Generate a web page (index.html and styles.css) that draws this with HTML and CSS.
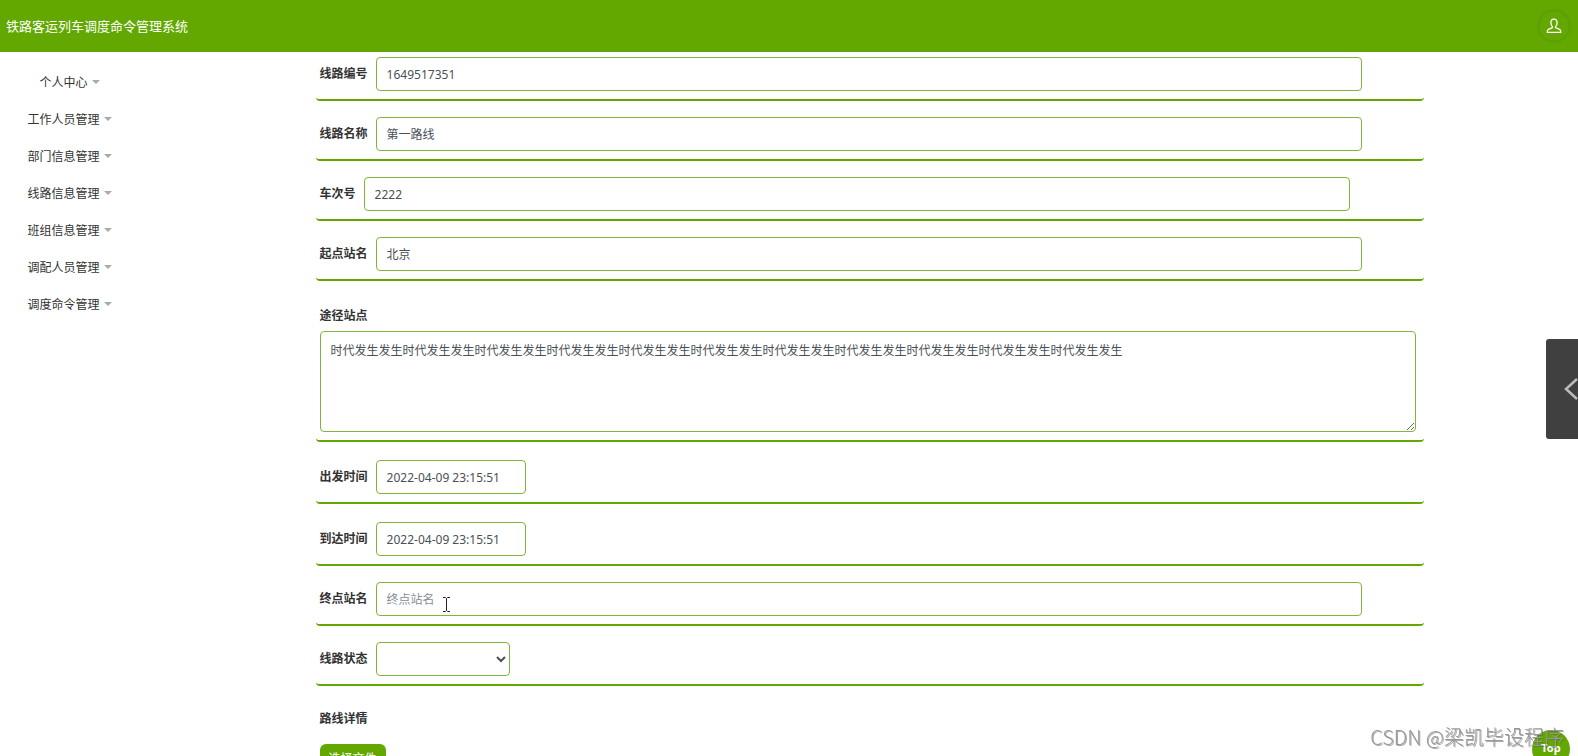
FILE: index.html
```
<!DOCTYPE html>
<html lang="zh-CN">
<head>
    <meta charset="UTF-8">
    <meta name="viewport" content="width=device-width, initial-scale=1.0">
    <title>铁路客运列车调度命令管理系统</title>
    <link rel="stylesheet" href="styles.css">
</head>
<body>
    <header class="navbar">
        <h1 class="brand">铁路客运列车调度命令管理系统</h1>
        <button type="button" class="user-btn" aria-label="个人中心">
            <svg width="16" height="16" viewBox="0 0 16 16" fill="none" stroke="currentColor" stroke-width="1.3" stroke-linejoin="round">
                <path d="M8 1.200C6 1.200 4.900 2.700 4.900 4.700C4.900 6.500 5.600 8 6.500 8.700V9.700L2.500 11.300C1.600 11.700 1.200 12.500 1.200 14.300H14.800C14.800 12.500 14.400 11.700 13.500 11.300L9.500 9.700V8.700C10.400 8 11.100 6.500 11.100 4.700C11.100 2.700 10 1.200 8 1.200Z"/>
            </svg>
        </button>
    </header>

    <div class="wrapper">
        <nav class="sidebar">
            <ul class="menu">
                <li><a href="#">个人中心</a></li>
                <li><a href="#">工作人员管理</a></li>
                <li><a href="#">部门信息管理</a></li>
                <li><a href="#">线路信息管理</a></li>
                <li><a href="#">班组信息管理</a></li>
                <li><a href="#">调配人员管理</a></li>
                <li><a href="#">调度命令管理</a></li>
            </ul>
        </nav>

        <form class="main-form" action="">
            <div class="form-group">
                <label for="xianlubianhao">线路编号</label>
                <input type="text" class="form-control" id="xianlubianhao" value="1649517351">
            </div>
            <div class="form-group">
                <label for="xianlumingcheng">线路名称</label>
                <input type="text" class="form-control" id="xianlumingcheng" value="第一路线">
            </div>
            <div class="form-group">
                <label for="checihao">车次号</label>
                <input type="text" class="form-control" id="checihao" value="2222">
            </div>
            <div class="form-group">
                <label for="qidianzhanming">起点站名</label>
                <input type="text" class="form-control" id="qidianzhanming" value="北京">
            </div>
            <div class="form-group stacked">
                <label for="tujingzhandian">途径站点</label>
                <textarea class="form-control" id="tujingzhandian">时代发生发生时代发生发生时代发生发生时代发生发生时代发生发生时代发生发生时代发生发生时代发生发生时代发生发生时代发生发生时代发生发生</textarea>
            </div>
            <div class="form-group date-group">
                <label for="chufashijian">出发时间</label>
                <input type="text" class="form-control date" id="chufashijian" value="2022-04-09 23:15:51">
            </div>
            <div class="form-group date-group">
                <label for="daodashijian">到达时间</label>
                <input type="text" class="form-control date" id="daodashijian" value="2022-04-09 23:15:51">
            </div>
            <div class="form-group">
                <label for="zhongdianzhanming">终点站名</label>
                <input type="text" class="form-control" id="zhongdianzhanming" placeholder="终点站名">
            </div>
            <div class="form-group">
                <label for="xianluzhuangtai">线路状态</label>
                <select class="form-control status" id="xianluzhuangtai">
                    <option></option>
                </select>
            </div>
            <div class="form-group stacked upload-group">
                <label for="xuanze">路线详情</label>
                <button type="button" class="upload-btn" id="xuanze">选择文件</button>
            </div>
        </form>
    </div>

    <button type="button" class="drawer" aria-label="展开">
        <svg width="14" height="22" viewBox="0 0 14 22" fill="none" stroke="currentColor" stroke-width="2.500">
            <path d="M13 1L2 11L13 21"/>
        </svg>
    </button>
    <a href="#" class="top-btn">Top</a>
    <div class="watermark">CSDN @梁凯毕设程序</div>
    <svg class="cursor" width="7" height="15" viewBox="0 0 7 15" fill="none" stroke="#222">
        <path d="M0 .5H2.500L3.500 1.500L4.500 .5H7M3.500 1.500V13.500M0 14.500H2.500L3.500 13.500L4.500 14.500H7"/>
    </svg>
</body>
</html>
```
FILE: styles.css
```
*{
    box-sizing: border-box;
}
body{
    font-family: "Noto Sans", "Noto Sans CJK SC", sans-serif;
    font-size: 12px;
    line-height: 18px;
    color: #333;
    background-color: #fff;
    margin: 0;
    height: 100vh;
    overflow: hidden;
}
button,input,textarea,select{
    font-family: inherit;
    font-size: inherit;
}

/* header */
.navbar{
    display: flex;
    justify-content: space-between;
    align-items: center;
    height: 52px;
    padding: 0 9px 0 6px;
    background-color: #62a800;
    color: #fff;
}
.brand{
    margin: 0;
    font-size: 13px;
    font-weight: normal;
}
.user-btn{
    display: flex;
    justify-content: center;
    align-items: center;
    width: 30px;
    height: 30px;
    padding: 0;
    border: none;
    border-radius: 50%;
    background-color: transparent;
    box-shadow: 0 0 3px rgba(0,0,0,0.2);
    color: #fff;
}

/* sidebar */
.wrapper{
    display: flex;
}
.sidebar{
    flex: 0 0 20%;
}
.menu{
    list-style: none;
    width: 139px;
    margin: 0;
    padding: 12px 0;
    text-align: center;
}
.menu a{
    display: block;
    line-height: 37px;
    color: #333;
    text-decoration: none;
}
.menu a::after{
    content: "";
    display: inline-block;
    margin-left: 4px;
    vertical-align: 3px;
    border-top: 4px solid #aaa;
    border-left: 4px solid transparent;
    border-right: 4px solid transparent;
}

/* form */
.main-form{
    flex: 1;
    margin-right: 154px;
    padding-top: 5px;
}
.form-group{
    display: flex;
    align-items: center;
    gap: 8px;
    margin-bottom: 16px;
    padding: 0 8px 8px 4px;
    border-bottom: 2px solid #62a800;
    border-radius: 4px;
}
.form-group label{
    flex: none;
    font-weight: bold;
}
.form-control{
    width: 90%;
    height: 34px;
    padding: 6px 10px;
    border: 1px solid #7fb63a;
    border-radius: 4px;
    background-color: #fff;
    color: #495057;
    outline: none;
}
.form-control::placeholder{
    color: #868e96;
}
.date{
    width: 150px;
}
.date-group{
    padding-top: 2px;
}
.status{
    width: 134px;
}
.stacked{
    flex-direction: column;
    align-items: flex-start;
    gap: 6px;
    padding-top: 10px;
}
textarea.form-control{
    width: 100%;
    height: 101px;
    padding: 10px;
    line-height: 18px;
}
.upload-group{
    gap: 16px;
    padding-top: 8px;
}
.upload-btn{
    height: 28px;
    padding: 0 9px;
    border: none;
    border-radius: 6px;
    background-color: #62a800;
    color: #fff;
}

/* floating parts */
.drawer{
    position: fixed;
    top: 339px;
    right: 0;
    display: flex;
    justify-content: flex-end;
    align-items: center;
    width: 32px;
    height: 100px;
    padding: 0;
    border: none;
    border-radius: 3px 0 0 3px;
    background-color: #404040;
    color: #bbb;
}
.top-btn{
    position: fixed;
    right: 8px;
    bottom: -12px;
    width: 38px;
    height: 38px;
    border-radius: 50%;
    background-color: #62a800;
    color: #fff;
    font-size: 11px;
    font-weight: bold;
    line-height: 36px;
    text-align: center;
    text-decoration: none;
}
.watermark{
    position: fixed;
    right: 14px;
    bottom: 4px;
    font-family: "Noto Sans CJK SC", sans-serif;
    font-size: 20px;
    font-weight: 300;
    line-height: 30px;
    color: #999;
    text-shadow: 1px 1px 0 rgba(90,90,90,0.5);
}
.cursor{
    position: fixed;
    top: 597px;
    left: 443px;
}
```
